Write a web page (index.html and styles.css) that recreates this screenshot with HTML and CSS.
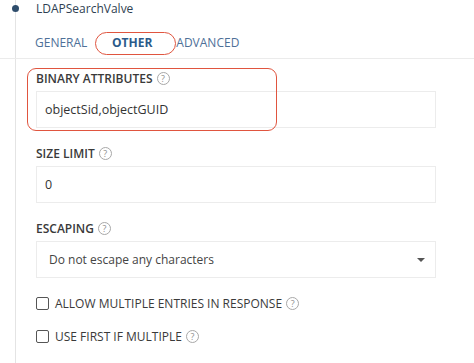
FILE: index.html
```html
<!DOCTYPE html>
<html>
<head>
  <title>LDAPSearchValve</title>
  <link rel="stylesheet" href="styles.css">
</head>
<body>
  <div class="valve">
    <span class="dot"></span>
    <div class="valve-head">LDAPSearchValve</div>

    <div class="tabs">
      <span class="tab">GENERAL</span>
      <span class="tab active">OTHER</span>
      <span class="tab">ADVANCED</span>
    </div>

    <form class="form">
      <div class="field">
        <label class="label">BINARY ATTRIBUTES <span class="help">?</span></label>
        <input class="input" type="text" value="objectSid,objectGUID">
      </div>

      <div class="field">
        <label class="label">SIZE LIMIT <span class="help">?</span></label>
        <input class="input" type="text" value="0">
      </div>

      <div class="field">
        <label class="label">ESCAPING <span class="help">?</span></label>
        <div class="select">
          <span>Do not escape any characters</span>
          <span class="caret"></span>
        </div>
      </div>

      <label class="check"><span class="box"></span>ALLOW MULTIPLE ENTRIES IN RESPONSE <span class="help">?</span></label>
      <label class="check"><span class="box"></span>USE FIRST IF MULTIPLE <span class="help">?</span></label>
    </form>
  </div>

  <!-- red annotation marks -->
  <div class="mark mark-tab"></div>
  <div class="mark mark-field"></div>
</body>
</html>
```

FILE: styles.css
```css
body {
  margin: 0;
  background-color: #fff;
  font-family: "Open Sans", sans-serif;
  color: #333;
}

.valve {
  position: relative;
  margin-left: 15px;
  border-left: 1px solid #e4e4e4;
  min-height: 363px;
  box-sizing: border-box;
}

.dot {
  position: absolute;
  left: -4px;
  top: 5px;
  width: 7px;
  height: 7px;
  border-radius: 50%;
  background-color: #2f4d6c;
}

.valve-head {
  height: 18px;
  line-height: 18px;
  padding-left: 20px;
  font-size: 12px;
  color: #2f3f52;
}

.tabs {
  display: flex;
  gap: 24px;
  margin-left: -16px;
  padding: 17px 0 7px 35px;
  border-bottom: 1px solid #ebebeb;
  font-size: 12px;
  line-height: 16px;
  color: #4e7098;
}

.tabs .tab:first-child {
  width: 53px;
}

.tabs .active {
  font-weight: 700;
  color: #2b5a8a;
}

.form {
  width: 400px;
  padding: 11px 0 0 20px;
}

.field {
  margin-bottom: 17px;
}

.label {
  display: flex;
  align-items: center;
  gap: 4px;
  height: 16px;
  margin-bottom: 5px;
  font-size: 12px;
  font-weight: 600;
  color: #3a3a3a;
}

.help {
  display: inline-flex;
  align-items: center;
  justify-content: center;
  width: 13px;
  height: 13px;
  border: 1px solid #a8a8a8;
  border-radius: 50%;
  box-sizing: border-box;
  font-size: 9px;
  line-height: 1;
  font-weight: 400;
  color: #8f8f8f;
}

.input, .select {
  display: flex;
  align-items: center;
  width: 100%;
  height: 37px;
  padding: 0 8px;
  border: 1px solid #ececec;
  border-radius: 0;
  box-sizing: border-box;
  font-family: inherit;
  font-size: 12.5px;
  color: #333;
  outline: none;
}

.select {
  justify-content: space-between;
  padding: 0 10px 0 12px;
  font-size: 12px;
  color: #444;
}

.caret {
  width: 0;
  height: 0;
  border-left: 4px solid transparent;
  border-right: 4px solid transparent;
  border-top: 4px solid #555;
}

.check {
  display: flex;
  align-items: center;
  gap: 6px;
  height: 16px;
  margin-bottom: 17px;
  font-size: 12px;
  color: #3a3a3a;
}

.check .help {
  margin-left: -2px;
}

.box {
  width: 11px;
  height: 11px;
  border: 1px solid #555;
  border-radius: 2px;
}

.mark {
  position: absolute;
  border: 1.5px solid #e0553f;
  box-sizing: border-box;
}

.mark-tab {
  left: 95px;
  top: 32px;
  width: 81px;
  height: 23px;
  border-radius: 12px;
}

.mark-field {
  left: 27px;
  top: 68px;
  width: 250px;
  height: 63px;
  border-radius: 9px;
}
```
